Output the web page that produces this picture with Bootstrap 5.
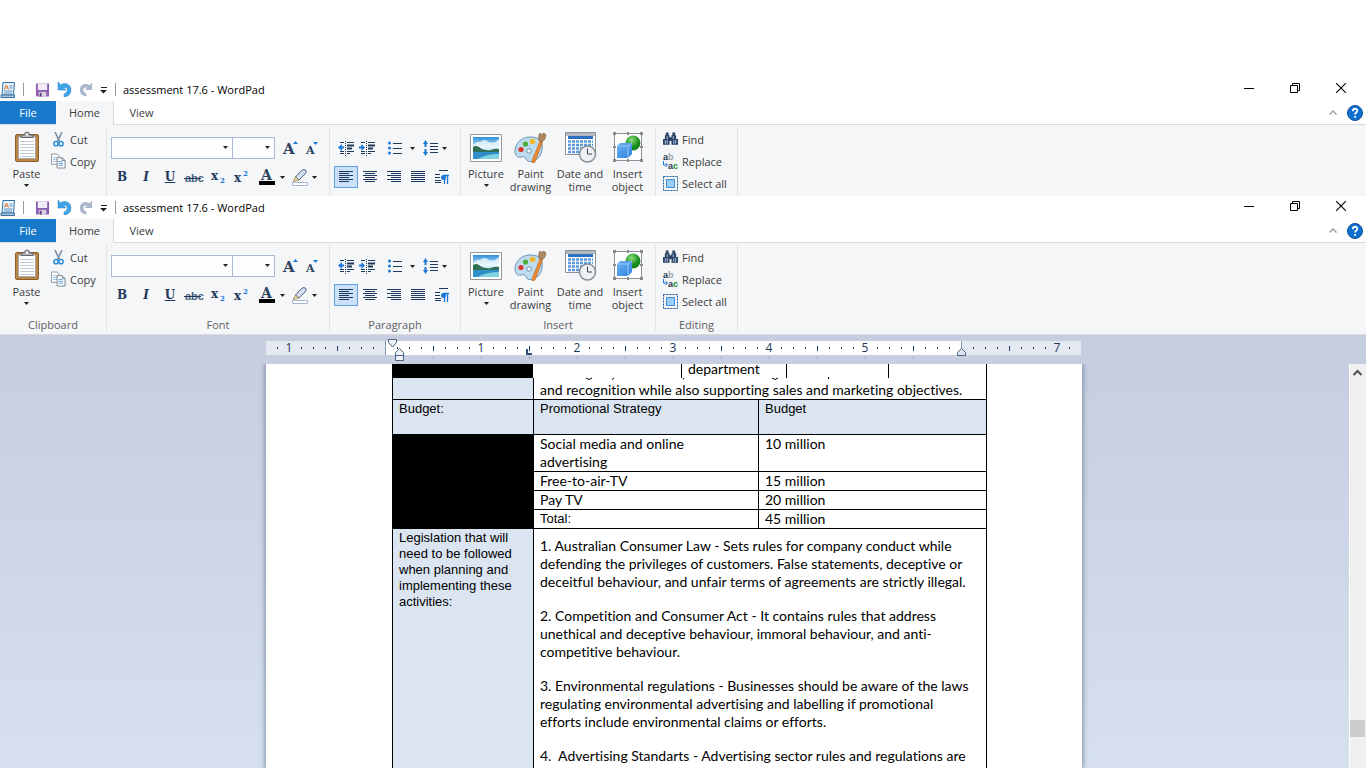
<!DOCTYPE html>
<html lang="en">
<head>
<meta charset="utf-8">
<meta name="viewport" content="width=device-width, initial-scale=1">
<title>assessment 17.6 - WordPad</title>
<link href="https://cdn.jsdelivr.net/npm/bootstrap@5.3.0/dist/css/bootstrap.min.css" rel="stylesheet">
<style>
  body { font: 11px/13px "Open Sans", sans-serif; color: #222; background: #fff; }
  button { border: 0; background: none; padding: 0; color: inherit; }
  svg { display: block; flex: none; }
  .app { height: 100vh; padding-top: 78px; }

  /* title bar */
  .titlebar { height: 23px; }
  .quick { height: 23px; gap: 7px; }
  .quick .rule { width: 1px; height: 13px; background: #9a9a9a; }
  .doc-title { font-size: 11px; color: #000; }
  .win-btn { width: 46px; height: 20px; }
  .win-set { padding-right: 2px; }

  /* tabs */
  .ribbon-tabs { height: 24px; border-bottom: 1px solid #dadbdc; }
  .ribbon-tabs a { height: 24px; text-decoration: none; color: #3b3b3b; line-height: 24px; text-align: center; }
  .tab-file { width: 56px; background: #1979ca; }
  .ribbon-tabs a.tab-file { color: #fff; height: 23px; }
  .tab-home { width: 58px; background: #f5f6f7; border-right: 1px solid #dadbdc; }
  .tab-view { width: 55px; }
  .tab-end { padding-right: 3px; gap: 10px; }

  /* ribbon groups */
  .ribbon-body { background: #f5f6f7; height: 92px; padding-top: 2px; border-bottom: 1px solid #dadbdc; color: #3b3b3b; }
  .compact .ribbon-body { height: 71px; border-bottom: 0; }
  .group { height: 86px; border-right: 1px solid #e2e3e4; }
  .compact .group { height: 69px; }
  .group-tools { height: 68px; }
  .group-name { color: #5f6064; text-align: center; height: 18px; line-height: 24px; }
  .g-clip { width: 107px; } .g-font { width: 223px; } .g-para { width: 131px; } .g-ins { width: 195px; } .g-edit { width: 82px; }
  .rows { padding: 10px 0 0 4px; }
  .big-btn { height: 66px; padding-top: 4px; }
  .big-btn svg { margin-bottom: 4px; }
  .row-btn { height: 22px; gap: 4px; }
  .clip-rows { padding-top: 1px; margin-left: -2px; }
  .edit-rows { padding: 1px 0 0 7px; }
  .indent-row { height: 22px; padding-left: 4px; }
  .tool-row { height: 22px; margin-top: 7px; }
  .font-row { margin-left: -1px; }
  .tool { width: 24px; height: 22px; color: #1e395b; font: bold 12px/22px "DejaVu Serif", serif; }
  .tool.on { background: #c9e0f7; border: 1px solid #62a2e4; }
  .split { width: 34px; }
  .combo { height: 22px; border: 1px solid #abbad4; background: #fcfdff; border-radius: 0; appearance: none; }
  .combo-wrap { position: relative; }
  .combo-wrap + .combo-wrap { margin-left: -1px; }
  .combo-wrap svg { position: absolute; right: 5px; top: 9px; pointer-events: none; }
  .w-face { width: 122px; } .w-size { width: 43px; }

  /* workspace */
  .workspace { background: linear-gradient(#c5cddf, #d6e0ee); }
  .ruler { height: 29px; padding-right: 18px; }
  .ruler text { font: 12px "Open Sans", sans-serif; fill: #1e395b; text-anchor: middle; }
  .sheet { width: 816px; background: #fff; box-shadow: 0 0 5px 1px #7d8ba5; padding-left: 126px; clip-path: inset(0 -12px); }
  .canvas-area { padding-right: 1px; }
  .scroller { width: 17px; background: #f0f0f0; border-left: 1px solid #fff; padding-right: 1px; }
  .thumb { height: 17px; background: #cdcdcd; margin-top: 338px; }

  /* document */
  .doc { width: 595px; font: 14px/18px Lato, sans-serif; font-variant-ligatures: none; color: #000; white-space: nowrap; }
  .strip { height: 14px; border-right: 1px solid #000; }
  .strip div { height: 14px; line-height: 10px; padding-left: 6px; }
  .strip .line-l { border-left: 1px solid #000; }
  .s1 { width: 148px; } .s2 { width: 105px; } .s3 { width: 102px; }
  .ink { background: #000; }
  .doc table { width: 595px; table-layout: fixed; border-collapse: separate; border-spacing: 0; border-right: 1px solid #000; }
  .doc td { border: 0 solid #000; border-width: 0 0 1px 1px; padding: 0 0 0 6px; vertical-align: top; }
  .doc .shade { background: #dbe5f1; }
  .arial, .arial td { font: 13px/16px "Liberation Sans", sans-serif; }
  .doc td.arial, .doc .arial td { padding-top: 1px; }
  .doc p { margin: 0 0 16px; }
  .c1 { width: 141px; } .c2 { width: 225px; }
  .h-rest { height: 22px; } .h-head { height: 35px; } .h-two { height: 37px; }
  .doc .rest { padding-top: 3px; }
  .doc .law { padding-top: 8px; }
  .tails { position: absolute; top: -1px; left: 0; }
</style>
</head>
<body>
<svg width="0" height="0" class="position-absolute" aria-hidden="true">
  <defs>
    <linearGradient id="sky" x2="0" y2="1"><stop stop-color="#2f8fdc"/><stop offset=".55" stop-color="#d9f1fb"/><stop offset="1" stop-color="#3fa7c9"/></linearGradient>
    <linearGradient id="cube" x2="1" y2="1"><stop stop-color="#6db3f5"/><stop offset="1" stop-color="#2f7fdc"/></linearGradient>
    <radialGradient id="ball" cx=".4" cy=".3"><stop stop-color="#8be07c"/><stop offset="1" stop-color="#168a1c"/></radialGradient>
  </defs>
  <symbol id="i-app" viewBox="0 0 16 16"><path d="M3 .5h11.500l-1 12.500H2z" fill="#eaf4fc" stroke="#2c6fa8"/><path d="M1 13h13.500v2.500H1z" fill="#a8c8e4" stroke="#3b6d99"/><path d="M9.500 4h3M9.500 6h3M4 9h8.500M4 11h8" stroke="#5b93c4"/><path d="M4.500 7.500l1.500-4h1l1.500 4M5.500 6h2" fill="none" stroke="#d8702a"/></symbol>
  <symbol id="i-save" viewBox="0 0 16 16"><path d="M1 1h14v14H2l-1-1z" fill="#8d5fb0"/><path d="M3 1h10v7H3z" fill="#f1ecf6"/><path d="M4 10h8v5H4z" fill="#d9d3e2"/><path d="M5 11h2v4H5z" fill="#5b3a7c"/></symbol>
  <symbol id="i-undo" viewBox="0 0 15 15"><path d="M1 0v8h8L6.500 5.700Q10.500 4.500 10.300 8.500 10 11 7 12v3q7-1 7-7C14 2 7.500 0 3.800 3z" fill="#3fa4ea" stroke="#2b83c6" stroke-width=".5"/></symbol>
  <symbol id="i-redo" viewBox="0 0 15 15"><path transform="matrix(-1 0 0 1 15 0)" d="M1 0v8h8L6.500 5.700Q10.500 4.500 10.300 8.500 10 11 7 12v3q7-1 7-7C14 2 7.500 0 3.800 3z" fill="#a9b7ca"/></symbol>
  <symbol id="i-custom" viewBox="0 0 8 8"><path d="M1 1.500h6" stroke="#222"/><path d="M0 4h7L3.500 7.500z" fill="#222"/></symbol>
  <symbol id="i-arrow" viewBox="0 0 5 3"><path d="M0 0h5L2.500 3z" fill="#222"/></symbol>
  <symbol id="i-min" viewBox="0 0 10 10"><path d="M0 5.500h10" stroke="#000"/></symbol>
  <symbol id="i-restore" viewBox="0 0 10 10"><path d="M.5 2.500h7v7h-7zM2.500 2.500v-2h7v7h-2" fill="none" stroke="#000"/></symbol>
  <symbol id="i-close" viewBox="0 0 10 10"><path d="M0 0l10 10M10 0L0 10" stroke="#000" stroke-width="1.100"/></symbol>
  <symbol id="i-up" viewBox="0 0 8 5"><path d="M.5 4.500L4 1l3.500 3.500" fill="none" stroke="#9a9a9a" stroke-width="1.300"/></symbol>
  <symbol id="i-help" viewBox="0 0 16 16"><circle cx="8" cy="8" r="7.500" fill="#0f6fd0" stroke="#0b4f94"/><path d="M5.800 6.200C5.800 3 10.300 3 10.300 5.800 10.300 7.500 8.100 7.500 8.100 9.500M8.100 11v1.700" fill="none" stroke="#fff" stroke-width="1.800"/></symbol>
  <symbol id="i-paste" viewBox="0 0 26 32"><rect x="1.500" y="3.500" width="23" height="27" rx="1.500" fill="#b98545" stroke="#8d5f2b"/><path d="M4.500 6h17v21.500h-17z" fill="#fff" stroke="#a7a9ad"/><path d="M6 10.500h14M6 13.500h14M6 16.500h14M6 19.500h14M6 22.500h14M6 25.500h14" stroke="#c3cbd5"/><path d="M7 6.500V4h3.500q0-3 2.500-3t2.500 3H19v2.500z" fill="#b9bcc1" stroke="#62656a"/><circle cx="13" cy="3.500" r="1" fill="#fff"/></symbol>
  <symbol id="i-cut" viewBox="0 0 15 15"><path d="M4 0l4.500 9.500M11 0L6.500 9.500" stroke="#7c8ea2" stroke-width="1.600"/><circle cx="5" cy="11.700" r="2.100" fill="none" stroke="#2e8fd6" stroke-width="1.500"/><circle cx="10" cy="11.700" r="2.100" fill="none" stroke="#2e8fd6" stroke-width="1.500"/></symbol>
  <symbol id="i-copy" viewBox="0 0 16 16"><path d="M.5.5h6l2 2v9h-8z" fill="#fff" stroke="#8a949f"/><path d="M2 4.500h5M2 6.500h5M2 8.500h5" stroke="#9dbfe0"/><path d="M6.500 4.500h5.500l3 3v8H6.500z" fill="#fff" stroke="#76808b"/><path d="M12 4.500v3h3" fill="none" stroke="#76808b"/><path d="M8 8.500h4M8 10.500h5M8 12.500h5" stroke="#5b9bd8"/></symbol>
  <symbol id="i-outdent" viewBox="0 0 17 15"><path d="M2 1.500h4M9 1.500h7M9 10.500h7M2 10.500h4M2 12.500h4M9 12.500h3" stroke="#1e395b"/><path d="M9 4.500h7M9 7.500h5" stroke="#1e395b" stroke-width="2"/><path d="M7.500 0v15" stroke="#1e395b" stroke-dasharray="1 1"/><path d="M0 6.500L4 3v2.500h2v2H4V10z" fill="#1a78d6"/></symbol>
  <symbol id="i-indent" viewBox="0 0 17 15"><path d="M2 1.500h4M9 1.500h7M9 10.500h7M2 10.500h4M2 12.500h4M9 12.500h3" stroke="#1e395b"/><path d="M9 4.500h7M9 7.500h5" stroke="#1e395b" stroke-width="2"/><path d="M7.500 0v15" stroke="#1e395b" stroke-dasharray="1 1"/><path d="M6 6.500L2.500 3v2.500H0v2h2.500V10z" fill="#1a78d6"/></symbol>
  <symbol id="i-bullets" viewBox="0 0 14 14"><path d="M5 2.500h9M5 7.500h9M5 12.500h9" stroke="#1e395b"/><circle cx="1.500" cy="2" r="1.500" fill="#1a78d6"/><circle cx="1.500" cy="7" r="1.500" fill="#1a78d6"/><circle cx="1.500" cy="12" r="1.500" fill="#1a78d6"/></symbol>
  <symbol id="i-spacing" viewBox="0 0 15 16"><path d="M7 3.500h8M7 6.500h8M7 9.500h8M7 12.500h8" stroke="#1e395b"/><path d="M2.500 0L5 4H3.500v3h-2V4H0zM2.500 16L5 12H3.500V9h-2v3H0z" fill="#1a78d6"/></symbol>
  <symbol id="i-left" viewBox="0 0 14 12"><path d="M0 .5h14M0 2.500h10M0 4.500h14M0 6.500h10M0 8.500h14M0 10.500h10" stroke="#1e395b"/></symbol>
  <symbol id="i-center" viewBox="0 0 14 12"><path d="M0 .5h14M2 2.500h10M0 4.500h14M2 6.500h10M0 8.500h14M2 10.500h10" stroke="#1e395b"/></symbol>
  <symbol id="i-right" viewBox="0 0 14 12"><path d="M0 .5h14M4 2.500h10M0 4.500h14M4 6.500h10M0 8.500h14M4 10.500h10" stroke="#1e395b"/></symbol>
  <symbol id="i-justify" viewBox="0 0 14 12"><path d="M0 .5h14M0 2.500h14M0 4.500h14M0 6.500h14M0 8.500h14M0 10.500h14" stroke="#1e395b"/></symbol>
  <symbol id="i-pilcrow" viewBox="0 0 14 14"><path d="M4 .5h9M0 4.500h5M0 7.500h5M0 10.500h6M0 12.500h6" stroke="#1e395b"/><path d="M8 5.500h6M9.500 5v9M12.500 5v9" stroke="#1a78d6" stroke-width="1.300"/><circle cx="8.500" cy="7.500" r="2.500" fill="#1a78d6"/></symbol>
  <symbol id="i-pen" viewBox="0 0 16 17"><path d="M3.500 8L9.500 1.500Q12-.5 14 1.500q.5 2-1 3.500L7 11z" fill="#d4def2" stroke="#4f6289"/><path d="M1 12.500L3.500 8 7 11z" fill="#e6d99a" stroke="#80713a" stroke-width=".6"/><path d="M.5 13.500h15v3H.5z" fill="#fff" stroke="#a6b5d0"/></symbol>
  <symbol id="i-picture" viewBox="0 0 32 28"><path d="M.5.5h31v27H.5z" fill="#fff" stroke="#94979b"/><path d="M3 3h26v22H3z" fill="url(#sky)"/><path d="M3 12q3-5 7-4 4-4 9 0 5 2 10-3v9H3z" fill="#fff" opacity=".7"/><path d="M3 13q3-2 6 0 5 4 12 3 4-2 8-1v3H3z" fill="#2f6f54"/><path d="M3 18h26v7H3z" fill="#2f8fcb"/><path d="M8 25q8-5 21-5v5z" fill="#7fd3e0"/></symbol>
  <symbol id="i-paint" viewBox="0 0 33 32"><path d="M16 5C7 5 1 12 1 19c0 4 2 7 6 6 3-1 4 0 5 2 2 4 8 3 12-1 5-5 5-13 3-17-2-3-6-4-11-4z" fill="#bfdcef" stroke="#6a93b5"/><circle cx="7" cy="17.500" r="2.600" fill="#d8392b"/><circle cx="11.500" cy="12" r="2.600" fill="#49ad3a"/><circle cx="18.500" cy="9.500" r="2.800" fill="#f0b82c"/><circle cx="15" cy="19" r="2.300" fill="#f5f6f7" stroke="#6a93b5"/><path d="M26 9l2.500 1L21 30l-3 1.500.5-4z" fill="#ee8b2e" stroke="#b9621a" stroke-width=".6"/><path d="M25 8.500Q24 3 26 1l1.500 1.500L30 1l2 2-1 4-3 3z" fill="#b08a62" stroke="#7a5737" stroke-width=".6"/></symbol>
  <symbol id="i-date" viewBox="0 0 33 31"><path d="M1.500.5h30v22h-30z" fill="#fff" stroke="#8e9297"/><path d="M2 1h29v3H2z" fill="#b4b9bf"/><path d="M4 4h25v3H4z" fill="#2f6fc0"/><path d="M4 9.500h25M4 13h25M4 16.500h25M4 20h19" stroke="#5b9ae0" stroke-width="2.500" stroke-dasharray="3 1"/><circle cx="23.500" cy="22" r="8" fill="#eef1f4" stroke="#8a8f95" stroke-width="1.500"/><path d="M23.500 16.500V22h4.500" stroke="#3f4348" fill="none"/></symbol>
  <symbol id="i-object" viewBox="0 0 30 30"><path d="M1.500 1.500h27v27h-27z" fill="#fff" stroke="#8e9297"/><path d="M0 0h3v3H0zM14 0h2v3h-2zM27 0h3v3h-3zM0 14h3v2H0zM27 14h3v2h-3zM0 27h3v3H0zM14 27h2v3h-2zM27 27h3v3h-3z" fill="#8a8a8a"/><circle cx="20" cy="11" r="7.500" fill="url(#ball)"/><path d="M4 14l3-3h12v11l-4 4H4z" fill="url(#cube)"/><path d="M4 14h11v12M15 14l4-3" fill="none" stroke="#9cccf8"/></symbol>
  <symbol id="i-find" viewBox="0 0 16 14"><path d="M3 0h3v3H3zM10 0h3v3h-3zM2 3h5v4H2zM9 3h5v4H9zM0 7h7v6H0zM9 7h7v6H9zM7 5h2v4H7z" fill="#2a4468"/><path d="M2.500 8.500V12M11.500 8.500V12M4.500 4v3M11 4v3M4.500 8v4M13.500 8v4" stroke="#b9cbe4"/></symbol>
  <symbol id="i-all" viewBox="0 0 15 15"><path d="M.5.5h14v14H.5z" fill="none" stroke="#1e5a96" stroke-dasharray="2 1"/><path d="M3.500 3.500h8v8h-8z" fill="#9ccdf7" stroke="#3c8edb"/></symbol>
</svg>

<div class="app d-flex flex-column overflow-hidden">
  <div class="compact flex-shrink-0" id="upper"></div>
  <div class="flex-shrink-0" id="lower"></div>

  <main class="workspace flex-grow-1 d-flex flex-column overflow-hidden">
    <div class="ruler d-flex justify-content-center flex-shrink-0">
      <svg width="816" height="29" id="ruler" role="img" aria-label="Ruler">
        <defs>
          <pattern id="ticks" width="96" height="29" patternUnits="userSpaceOnUse" x="119">
            <path d="M12.500 12v2M24.500 12v2M36.500 12v2M48.500 11v5M60.500 12v2M72.500 12v2M84.500 12v2" stroke="#1e395b"/>
          </pattern>
        </defs>
        <path d="M0 6h815v14H0z" fill="#e4e8f0"/>
        <path d="M120 6h575v14H120z" fill="#fff"/>
        <path d="M0 6h815v14H0z" fill="url(#ticks)"/>
        <path d="M119.500 6v14M695.500 6v8" stroke="#7f93b0"/>
        <path d="M167 22.500h500" stroke="#8e9db8" stroke-width="2" stroke-dasharray="1 47"/>
        <path d="M122.500 4.500h8v3l-4 4.500-4-4.500z" fill="#eef1f6" stroke="#47617f"/>
        <path d="M129.500 20.500v-3l4-4 4 4v8h-8zM129.500 20.500h8" fill="#eef1f6" stroke="#47617f"/>
        <path d="M691.500 20.500v-3l4-4 4 4v3z" fill="#dfe4ec" stroke="#47617f"/>
        <path d="M261 14v5h5" fill="none" stroke="#334f77" stroke-width="2"/>
      </svg>
    </div>
    <div class="d-flex flex-grow-1 overflow-hidden">
      <div class="canvas-area flex-grow-1 d-flex justify-content-center overflow-hidden">
        <article class="sheet">
          <div class="doc">
            <div class="strip d-flex">
              <div class="c1 ink"></div>
              <div class="s1"></div>
              <div class="line-l s2">department</div>
              <div class="line-l s3"></div>
              <div class="line-l"></div>
            </div>
            <table>
              <colgroup><col class="c1"><col class="c2"><col></colgroup>
              <tr class="h-rest">
                <td class="shade"></td>
                <td colspan="2" class="position-relative rest">and recognition while also supporting sales and marketing objectives.
                  <svg class="tails" width="440" height="5" aria-hidden="true"><path d="M52 1q3 3 6 0M78 2.500l2-1.500M149 2.500l1-1.500M238 1q3 3 6 0M294.500 0v2" fill="none" stroke="#000"/></svg></td>
              </tr>
              <tr class="arial h-head">
                <td class="shade">Budget:</td><td class="shade">Promotional Strategy</td><td class="shade">Budget</td>
              </tr>
              <tr class="h-two"><td rowspan="4" class="ink"></td><td>Social media and online<br>advertising</td><td>10 million</td></tr>
              <tr><td>Free-to-air-TV</td><td>15 million</td></tr>
              <tr><td>Pay TV</td><td>20 million</td></tr>
              <tr><td class="arial">Total:</td><td>45 million</td></tr>
              <tr>
                <td class="shade arial">Legislation that will<br>need to be followed<br>when planning and<br>implementing these<br>activities:</td>
                <td colspan="2" class="law">
                  <p>1. Australian Consumer Law - Sets rules for company conduct while<br>defending the privileges of customers. False statements, deceptive or<br>deceitful behaviour, and unfair terms of agreements are strictly illegal.</p>
                  <p>2. Competition and Consumer Act - It contains rules that address<br>unethical and deceptive behaviour, immoral behaviour, and anti-<br>competitive behaviour.</p>
                  <p>3. Environmental regulations - Businesses should be aware of the laws<br>regulating environmental advertising and labelling if promotional<br>efforts include environmental claims or efforts.</p>
                  <p>4.&nbsp; Advertising Standarts - Advertising sector rules and regulations are</p>
                </td>
              </tr>
            </table>
          </div>
        </article>
      </div>
      <div class="scroller flex-shrink-0">
        <svg width="15" height="18" viewBox="0 0 15 18"><path d="M3.500 11l4-4 4 4" fill="none" stroke="#505050" stroke-width="2"/></svg>
        <div class="thumb"></div>
      </div>
    </div>
  </main>
</div>

<template id="ribbon">
  <header class="titlebar d-flex justify-content-between bg-white">
    <div class="quick d-flex align-items-center">
      <svg width="16" height="16"><use href="#i-app"/></svg>
      <span class="rule"></span>
      <button class="ms-1" aria-label="Save"><svg width="15" height="16"><use href="#i-save"/></svg></button>
      <button aria-label="Undo"><svg width="15" height="15"><use href="#i-undo"/></svg></button>
      <button aria-label="Redo"><svg width="14" height="15"><use href="#i-redo"/></svg></button>
      <button aria-label="Customize"><svg width="8" height="8"><use href="#i-custom"/></svg></button>
      <span class="rule"></span>
      <span class="doc-title">assessment 17.6 - WordPad</span>
    </div>
    <div class="win-set d-flex">
      <button class="win-btn d-flex align-items-center justify-content-center" aria-label="Minimize"><svg width="10" height="10"><use href="#i-min"/></svg></button>
      <button class="win-btn d-flex align-items-center justify-content-center" aria-label="Restore"><svg width="10" height="10"><use href="#i-restore"/></svg></button>
      <button class="win-btn d-flex align-items-center justify-content-center" aria-label="Close"><svg width="10" height="10"><use href="#i-close"/></svg></button>
    </div>
  </header>
  <nav class="ribbon-tabs d-flex bg-white">
    <a href="#" class="tab-file">File</a>
    <a href="#" class="tab-home">Home</a>
    <a href="#" class="tab-view">View</a>
    <div class="tab-end ms-auto d-flex align-items-center">
      <button aria-label="Collapse ribbon"><svg width="8" height="5"><use href="#i-up"/></svg></button>
      <button aria-label="Help"><svg width="16" height="16"><use href="#i-help"/></svg></button>
    </div>
  </nav>
  <div class="ribbon-body d-flex">
    <section class="group g-clip">
      <div class="group-tools d-flex">
        <button class="big-btn d-flex flex-column align-items-center" style="width:53px"><svg width="26" height="32"><use href="#i-paste"/></svg>Paste<svg class="mt-1" width="5" height="3"><use href="#i-arrow"/></svg></button>
        <div class="clip-rows">
          <button class="row-btn d-flex align-items-center"><svg width="15" height="15"><use href="#i-cut"/></svg>Cut</button>
          <button class="row-btn d-flex align-items-center"><svg width="15" height="16"><use href="#i-copy"/></svg>Copy</button>
        </div>
      </div>
      <div class="group-name">Clipboard</div>
    </section>
    <section class="group g-font">
      <div class="group-tools rows">
        <div class="d-flex align-items-center">
          <span class="combo-wrap"><select class="combo w-face d-block" aria-label="Font family"></select><svg width="5" height="3"><use href="#i-arrow"/></svg></span>
          <span class="combo-wrap"><select class="combo w-size d-block" aria-label="Font size"></select><svg width="5" height="3"><use href="#i-arrow"/></svg></span>
          <button class="tool ms-1" aria-label="Grow font"><svg width="24" height="22"><text x="4" y="17" font-size="15" fill="#2b4360">A</text><path d="M14 7l2.500-3L19 7z" fill="#1a78d6"/></svg></button>
          <button class="tool" aria-label="Shrink font"><svg width="24" height="22"><text x="3" y="17" font-size="11" fill="#2b4360">A</text><path d="M10 5h5l-2.500 3z" fill="#1a78d6"/></svg></button>
        </div>
        <div class="tool-row font-row d-flex">
          <button class="tool">B</button>
          <button class="tool fst-italic">I</button>
          <button class="tool text-decoration-underline">U</button>
          <button class="tool" aria-label="Strikethrough"><svg width="24" height="22"><text x="3" y="16" font-size="11" font-family="Liberation Sans" font-weight="700" fill="#47607e">abc</text><path d="M2 12.500h17" stroke="#1e395b"/></svg></button>
          <button class="tool" aria-label="Subscript"><svg width="24" height="22"><text x="5" y="14" font-size="12" fill="#1e395b">x</text><text x="14" y="17" font-size="7" fill="#1a78d6">2</text></svg></button>
          <button class="tool" aria-label="Superscript"><svg width="24" height="22"><text x="4" y="16" font-size="12" fill="#1e395b">x</text><text x="13" y="10" font-size="7" fill="#1a78d6">2</text></svg></button>
          <button class="tool split d-flex align-items-center" aria-label="Text colour"><svg width="26" height="22"><text x="7" y="14" font-size="14" fill="#2b4360">A</text><path d="M5 15h16v4H5z"/></svg><svg width="5" height="3"><use href="#i-arrow"/></svg></button>
          <button class="tool split d-flex align-items-center gap-1" aria-label="Text highlight colour"><svg class="ms-1" width="16" height="17"><use href="#i-pen"/></svg><svg width="5" height="3"><use href="#i-arrow"/></svg></button>
        </div>
      </div>
      <div class="group-name">Font</div>
    </section>
    <section class="group g-para">
      <div class="group-tools rows">
        <div class="indent-row d-flex align-items-center">
          <button class="pe-1" aria-label="Decrease indent"><svg width="17" height="15"><use href="#i-outdent"/></svg></button>
          <button class="pe-2" aria-label="Increase indent"><svg width="17" height="15"><use href="#i-indent"/></svg></button>
          <button class="d-flex align-items-center gap-2 ms-1 pe-2" aria-label="List"><svg width="14" height="14"><use href="#i-bullets"/></svg><svg width="5" height="3"><use href="#i-arrow"/></svg></button>
          <button class="d-flex align-items-center gap-1" aria-label="Line spacing"><svg width="15" height="16"><use href="#i-spacing"/></svg><svg width="5" height="3"><use href="#i-arrow"/></svg></button>
        </div>
        <div class="tool-row d-flex">
          <button class="tool on d-flex align-items-center justify-content-center" aria-label="Align left"><svg width="14" height="12"><use href="#i-left"/></svg></button>
          <button class="tool d-flex align-items-center justify-content-center" aria-label="Centre"><svg width="14" height="12"><use href="#i-center"/></svg></button>
          <button class="tool d-flex align-items-center justify-content-center" aria-label="Align right"><svg width="14" height="12"><use href="#i-right"/></svg></button>
          <button class="tool d-flex align-items-center justify-content-center" aria-label="Justify"><svg width="14" height="12"><use href="#i-justify"/></svg></button>
          <button class="tool d-flex align-items-center justify-content-center" aria-label="Paragraph"><svg width="14" height="14"><use href="#i-pilcrow"/></svg></button>
        </div>
      </div>
      <div class="group-name">Paragraph</div>
    </section>
    <section class="group g-ins">
      <div class="group-tools d-flex" style="padding-left:2px">
        <button class="big-btn d-flex flex-column align-items-center" style="width:46px"><svg width="32" height="32" viewBox="0 -3 32 32"><use href="#i-picture" width="32" height="28"/></svg>Picture<svg class="mt-1" width="5" height="3"><use href="#i-arrow"/></svg></button>
        <button class="big-btn d-flex flex-column align-items-center" style="width:43px"><svg width="33" height="32" viewBox="0 -1 33 32"><use href="#i-paint" width="33" height="32"/></svg>Paint<br>drawing</button>
        <button class="big-btn d-flex flex-column align-items-center" style="width:56px"><svg width="33" height="32" viewBox="0 -1 33 32"><use href="#i-date" width="33" height="31"/></svg>Date and<br>time</button>
        <button class="big-btn d-flex flex-column align-items-center" style="width:39px"><svg width="30" height="32" viewBox="0 -1 30 32"><use href="#i-object" width="30" height="30"/></svg>Insert<br>object</button>
      </div>
      <div class="group-name">Insert</div>
    </section>
    <section class="group g-edit">
      <div class="group-tools edit-rows">
        <button class="row-btn d-flex align-items-center"><svg width="15" height="14"><use href="#i-find"/></svg>Find</button>
        <button class="row-btn d-flex align-items-center"><svg width="15" height="22" overflow="visible"><g font-family="Liberation Sans" font-weight="700" font-size="9"><text x="0" y="10" fill="#1e395b">a<tspan fill="#9a9fa6">b</tspan></text><text x="5" y="19" fill="#1e395b">a<tspan fill="#1d8a2c">c</tspan></text></g><path d="M.5 11v4H4M2.500 13l2 2-2 2" fill="none" stroke="#1a78d6"/></svg>Replace</button>
        <button class="row-btn d-flex align-items-center"><svg width="15" height="15"><use href="#i-all"/></svg>Select all</button>
      </div>
      <div class="group-name">Editing</div>
    </section>
  </div>
</template>

<script src="https://cdn.jsdelivr.net/npm/bootstrap@5.3.0/dist/js/bootstrap.bundle.min.js"></script>
<script>
  // Both toolbars share one ribbon; the compact one has no group names.
  const ribbon = document.getElementById('ribbon').content;
  for (const id of ['upper', 'lower']) document.getElementById(id).append(ribbon.cloneNode(true));
  document.querySelectorAll('.compact .group-name').forEach(el => el.remove());
  // Ruler numbers sit one inch (96px) apart.
  const ruler = document.getElementById('ruler');
  for (const n of [-1, 1, 2, 3, 4, 5, 7]) {
    const t = document.createElementNS('http://www.w3.org/2000/svg', 'text');
    t.setAttribute('x', 119 + 96 * n);
    t.setAttribute('y', 17);
    t.textContent = Math.abs(n);
    ruler.append(t);
  }
</script>
</body>
</html>
